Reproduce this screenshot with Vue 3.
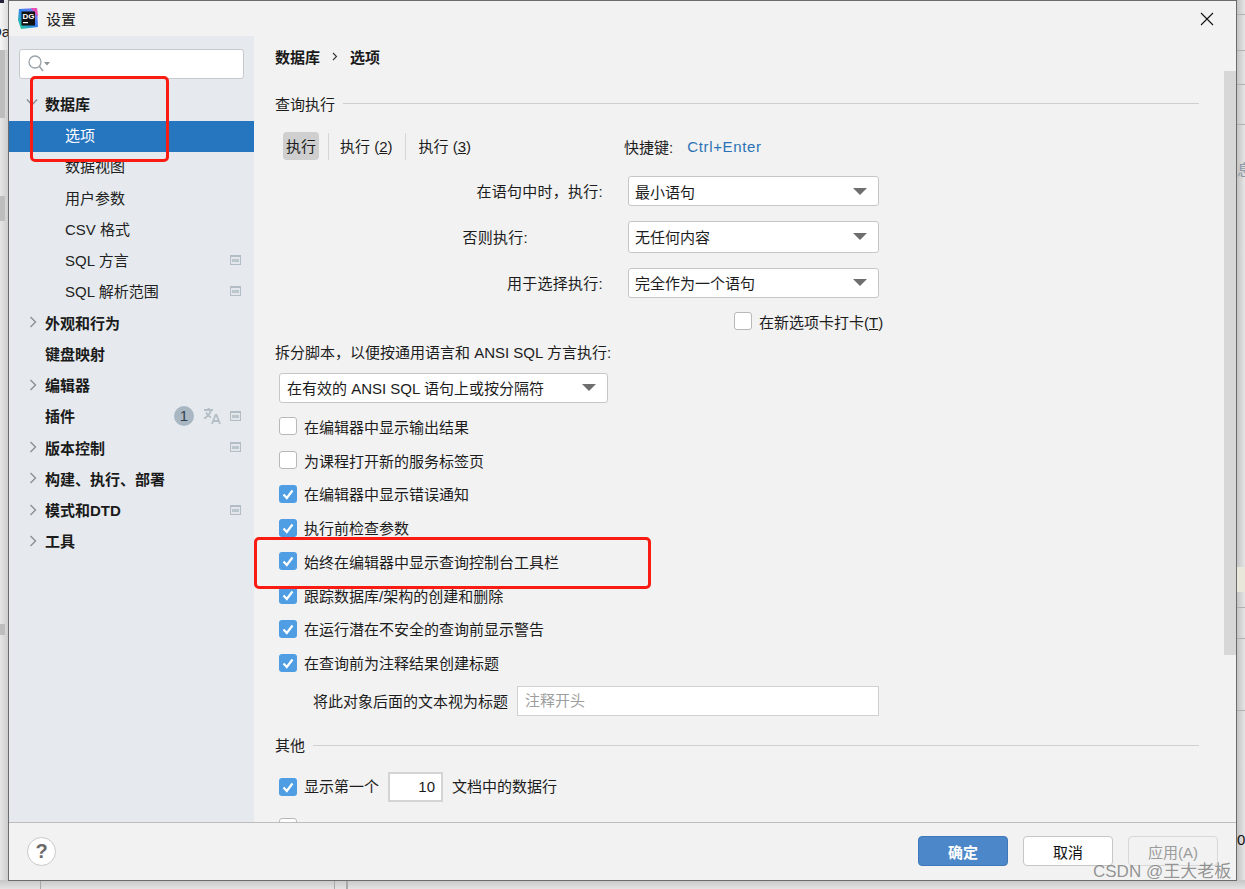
<script setup>
const tree = [
  { label: '数据库', top: true, open: true },
  { label: '选项', selected: true },
  { label: '数据视图' },
  { label: '用户参数' },
  { label: 'CSV 格式' },
  { label: 'SQL 方言', win: true },
  { label: 'SQL 解析范围', win: true },
  { label: '外观和行为', top: true, arrow: true },
  { label: '键盘映射', top: true },
  { label: '编辑器', top: true, arrow: true },
  { label: '插件', top: true, badge: '1', lang: true, win: true },
  { label: '版本控制', top: true, arrow: true, win: true },
  { label: '构建、执行、部署', top: true, arrow: true },
  { label: '模式和DTD', top: true, arrow: true, win: true },
  { label: '工具', top: true, arrow: true }
]
const selects = [
  { label: '在语句中时，执行:', value: '最小语句', cls: 'r1' },
  { label: '否则执行:', value: '无任何内容', cls: 'r2' },
  { label: '用于选择执行:', value: '完全作为一个语句', cls: 'r3' }
]
const checks = [
  { label: '在编辑器中显示输出结果', on: false },
  { label: '为课程打开新的服务标签页', on: false },
  { label: '在编辑器中显示错误通知', on: true },
  { label: '执行前检查参数', on: true },
  { label: '始终在编辑器中显示查询控制台工具栏', on: true },
  { label: '跟踪数据库/架构的创建和删除', on: true },
  { label: '在运行潜在不安全的查询前显示警告', on: true },
  { label: '在查询前为注释结果创建标题', on: true }
]
</script>

<template>
  <div class="page">
    <div class="bd bd-left">
      <i class="bd-top"></i>
      <i class="bd-spot"></i>
      <span class="bd-da">Da</span>
      <i class="bd-dark d1"></i><i class="bd-dark d2"></i><i class="bd-dark d3"></i>
    </div>
    <div class="bd bd-right">
      <i class="bd-line l1"></i><i class="bd-line l2"></i><i class="bd-line l3"></i>
      <i class="bd-line l4"></i><i class="bd-line l5"></i><i class="bd-line l6"></i><i class="bd-line l7"></i>
      <i class="bd-beige"></i>
      <span class="bd-xi">息</span>
      <span class="bd-zero">0</span>
    </div>
    <div class="bd bd-bottom"><i class="v v1"></i><i class="v v2"></i><i class="v v3"></i></div>

    <div class="dialog">
      <header class="titlebar">
        <svg class="logo" width="20" height="21" viewBox="0 0 20 21">
          <defs>
            <linearGradient id="dgl" x1="0" y1="1" x2="1" y2="0">
              <stop offset="0" stop-color="#22d88f" />
              <stop offset="0.5" stop-color="#2f80ed" />
              <stop offset="1" stop-color="#9775f8" />
            </linearGradient>
          </defs>
          <polygon points="1,1 19,0 20,19 3,21 0,12" fill="url(#dgl)" />
          <polygon points="13,0 19,0 20,9" fill="#e84fb2" />
          <rect x="3.5" y="3.5" width="13.5" height="14" fill="#111" />
          <text x="4.5" y="11" class="logo-text">DG</text>
          <rect x="5" y="14" width="5" height="1.2" fill="#fff" />
        </svg>
        <span class="title">设置</span>
        <svg class="close" width="14" height="14" viewBox="0 0 14 14">
          <path d="M1 1 13 13M13 1 1 13" stroke="#111" stroke-width="1.1" fill="none" />
        </svg>
      </header>

      <div class="body">
        <aside class="sidebar">
          <div class="search">
            <svg width="24" height="20" viewBox="0 0 24 20">
              <circle cx="8" cy="8" r="6" fill="none" stroke="#9aa3a9" stroke-width="1.3" />
              <path d="M12.500 12.500 16 17" stroke="#9aa3a9" stroke-width="1.500" />
              <path d="M17 8h6l-3 3.500z" fill="#8c959b" />
            </svg>
          </div>
          <ul class="tree">
            <li
              v-for="item in tree"
              :key="item.label"
              class="node"
              :class="{ top: item.top, selected: item.selected }"
            >
              <svg v-if="item.arrow" class="chev" width="8" height="12" viewBox="0 0 8 12">
                <path d="M1.500 1 6.500 6l-5 5" fill="none" stroke="#8a8f93" stroke-width="1.400" />
              </svg>
              <svg v-if="item.open" class="chev down" width="12" height="9" viewBox="0 0 12 9">
                <path d="M1 1.500 6 7l5-5.500" fill="none" stroke="#8a8f93" stroke-width="1.400" />
              </svg>
              <span class="node-label">{{ item.label }}</span>
              <span v-if="item.badge" class="badge">{{ item.badge }}</span>
              <svg v-if="item.lang" class="lang" width="18" height="18" viewBox="0 0 18 18">
                <path d="M1 3h9M5.500 1v2M8 3C7 7 4 10 1 11.500M3 5.500c1 2 3 4 5 5" fill="none" stroke="#b3bec6" stroke-width="1.800" />
                <path d="M9 17l3.500-9h1L17 17M10.500 14h5" fill="none" stroke="#b3bec6" stroke-width="1.800" />
              </svg>
              <span v-if="item.win" class="win"><i></i></span>
            </li>
          </ul>
        </aside>

        <main class="main">
          <div class="crumbs">
            <b>数据库</b>
            <svg width="6" height="9" viewBox="0 0 6 9"><path d="M1 1l3.500 3.500L1 8" fill="none" stroke="#333" stroke-width="1.100" /></svg>
            <b>选项</b>
          </div>

          <div class="group first"><span>查询执行</span><i></i></div>

          <div class="tabs">
            <span class="tab active">执行</span>
            <i class="tab-sep"></i>
            <span class="tab">执行 (<u>2</u>)</span>
            <i class="tab-sep"></i>
            <span class="tab">执行 (<u>3</u>)</span>
            <span class="hotkey">快捷键:</span>
            <span class="keys">Ctrl+Enter</span>
          </div>

          <div v-for="s in selects" :key="s.label" class="select-row" :class="s.cls">
            <span class="select-label">{{ s.label }}</span>
            <div class="select"><span>{{ s.value }}</span><i class="caret"></i></div>
          </div>

          <label class="check newtab">
            <i class="box"></i>
            <span>在新选项卡打卡(<u>T</u>)</span>
          </label>

          <div class="split">拆分脚本，以便按通用语言和 ANSI SQL 方言执行:</div>
          <div class="select wide"><span>在有效的 ANSI SQL 语句上或按分隔符</span><i class="caret"></i></div>

          <div class="checks">
            <label v-for="c in checks" :key="c.label" class="check">
              <i class="box" :class="{ on: c.on }">
                <svg v-if="c.on" width="18" height="18" viewBox="0 0 18 18"><path d="M4.500 9.500 7.800 13l5.700-7.500" fill="none" stroke="#fff" stroke-width="2.200" /></svg>
              </i>
              <span>{{ c.label }}</span>
            </label>
          </div>

          <div class="title-row">
            <span>将此对象后面的文本视为标题</span>
            <div class="text-input">注释开头</div>
          </div>

          <div class="group other"><span>其他</span><i></i></div>

          <div class="first-row">
            <i class="box on">
              <svg width="18" height="18" viewBox="0 0 18 18"><path d="M4.500 9.500 7.800 13l5.700-7.500" fill="none" stroke="#fff" stroke-width="2.200" /></svg>
            </i>
            <span class="first-a">显示第一个</span>
            <div class="num">10</div>
            <span class="first-b">文档中的数据行</span>
          </div>
          <i class="box clipped"></i>

          <div class="scrollbar"></div>
        </main>
      </div>

      <footer class="footer">
        <div class="help">?</div>
        <button class="btn primary">确定</button>
        <button class="btn">取消</button>
        <button class="btn disabled">应用(A)</button>
      </footer>
    </div>

    <div class="mark mark-a"></div>
    <div class="mark mark-b"></div>
    <div class="watermark">CSDN @王大老板</div>
  </div>
</template>

<style>
html, body { margin: 0; padding: 0; }
</style>

<style scoped>
.page {
  position: relative;
  width: 1245px;
  height: 889px;
  overflow: hidden;
  background: #e4e4e4;
  font-family: "Liberation Sans", "Noto Sans CJK SC", sans-serif;
  font-size: 15px;
  color: #1c1c1c;
}
.bd { position: absolute; overflow: hidden; }
.bd-left { left: 0; top: 0; width: 8px; height: 889px; background: linear-gradient(90deg, #e6e6e6, #cdcdcd); }
.bd-top { position: absolute; left: 0; top: 0; width: 8px; height: 50px; background: linear-gradient(90deg, #f6f6f6, #dcdcdc); }
.bd-spot { position: absolute; left: 0; top: 0; width: 4px; height: 3px; background: #23233a; }
.bd-da { position: absolute; left: -9px; top: 23px; font-size: 15px; color: #222; }
.bd-dark { position: absolute; left: 0; width: 5px; background: #bdbdbd; }
.d1 { top: 50px; height: 68px; }
.d2 { top: 196px; height: 25px; }
.d3 { top: 624px; height: 11px; }
.bd-right {
  left: 1237px; top: 0; width: 8px; height: 889px;
  background: linear-gradient(90deg, #c4c4c4, #e6e6e6);
}
.bd-line { position: absolute; left: 0; width: 8px; height: 1px; background: #b0b0b0; }
.l1 { top: 14px; } .l2 { top: 50px; } .l3 { top: 84px; } .l4 { top: 124px; }
.l5 { top: 607px; } .l6 { top: 638px; } .l7 { top: 710px; }
.bd-beige { position: absolute; left: 0; top: 567px; width: 8px; height: 25px; background: #e9e6da; }
.bd-xi { position: absolute; left: 0; top: 158px; font-size: 15px; color: #8b98a5; }
.bd-zero { position: absolute; left: 0; top: 831px; font-size: 15px; color: #111; }
.bd-bottom { left: 0; top: 880px; width: 1245px; height: 9px; background: linear-gradient(#c6c6c6, #e4e4e4); }
.v { position: absolute; top: 0; width: 1px; height: 9px; background: #a8a8a8; }
.v1 { left: 40px; } .v2 { left: 334px; } .v3 { left: 346px; width: 2px; }

.dialog {
  position: absolute;
  left: 8px;
  top: 0;
  width: 1229px;
  height: 881px;
  box-sizing: border-box;
  border: 1px solid #6c6c6c;
  background: #f2f2f2;
  display: flex;
  flex-direction: column;
}
.titlebar {
  height: 35px;
  flex: none;
  display: flex;
  align-items: center;
  padding-left: 9px;
}
.logo { flex: none; }
.logo-text { font-size: 8px; font-weight: 700; fill: #fff; font-family: "Liberation Sans", sans-serif; }
.title { margin-left: 8px; font-size: 15px; color: #222; }
.close { margin-left: auto; margin-right: 22px; }

.body { flex: 1; display: flex; min-height: 0; }
.sidebar {
  width: 245px;
  flex: none;
  background: #e6eaee;
  padding-top: 13px;
  box-sizing: border-box;
}
.search {
  width: 225px;
  height: 30px;
  margin-left: 10px;
  box-sizing: border-box;
  border: 1px solid #c6c9cc;
  border-radius: 3px;
  background: #fff;
  display: flex;
  align-items: center;
  padding-left: 7px;
}
.tree { list-style: none; margin: 10.3px 0 0; padding: 0; }
.node {
  position: relative;
  height: 31.25px;
  box-sizing: border-box;
  display: flex;
  align-items: center;
  padding: 0 13px 3px 56px;
  color: #222;
}
.node.top { padding-left: 36px; font-weight: 700; color: #1a1a1a; }
.node.selected { background: #2675bf; color: #fff; }
.chev { position: absolute; left: 20px; top: 8px; }
.chev.down { left: 17px; top: 9px; }
.badge {
  margin-left: auto;
  width: 20px;
  height: 20px;
  border-radius: 50%;
  background: #a9b7c2;
  color: #33424e;
  font-size: 15px;
  font-weight: 400;
  text-align: center;
  line-height: 20px;
}
.lang { margin-left: 9px; }
.win {
  margin-left: auto;
  width: 11px;
  height: 10px;
  box-sizing: border-box;
  background: #e3e7eb;
  border: 1px solid #b2bdc5;
  border-top-width: 2px;
  padding: 2px 1px 0;
  display: block;
}
.lang + .win, .badge + .win { margin-left: 9px; }
.win i { display: block; height: 3px; background: #bcc6cd; }

.main {
  position: relative;
  flex: 1;
  min-width: 0;
  overflow: hidden;
  padding: 9px 37px 0 21px;
  box-sizing: border-box;
}
.crumbs {
  height: 22px;
  display: flex;
  align-items: center;
  gap: 12px;
  color: #1a1a1a;
}
.crumbs b { font-weight: 700; }
.group { height: 22px; display: flex; align-items: center; gap: 8px; }
.group i { flex: 1; height: 1px; margin-top: 2px; background: #cfcfcf; }
.group.first { margin-top: 25px; }
.group.first i { margin-top: 1px; }
.group.other { margin-top: 18px; }

.tabs {
  margin: 18px 0 0 8px;
  height: 28px;
  display: flex;
  align-items: center;
}
.tab { line-height: 26px; padding-top: 2px; white-space: nowrap; }
.tab.active {
  width: 36px;
  background: #cfcfcf;
  border-radius: 4px;
  text-align: center;
}
.tab-sep { width: 1px; height: 27px; background: #d6d6d6; margin: 0 11px 0 9px; }
.tab-sep + .tab + .tab-sep { margin-left: 12px; margin-right: 13px; }
.hotkey { margin-left: 153px; }
.keys { margin-left: 14px; padding-top: 1px; color: #2a72b5; letter-spacing: 0.65px; }

.select-row { display: flex; align-items: center; }
.select-label {
  width: 329px;
  flex: none;
  margin: 0 24px 2px 0;
  padding-right: 1px;
  box-sizing: border-box;
  text-align: right;
  letter-spacing: 0.25px;
}
.r1 { margin-top: 16px; height: 30px; }
.r2 { margin-top: 15px; height: 32px; }
.r2 .select-label { padding-right: 76px; }
.r3 { margin-top: 15px; height: 30px; }
.select {
  width: 251px;
  height: 100%;
  box-sizing: border-box;
  border: 1px solid #c6c6c6;
  border-radius: 3px;
  background: #fff;
  display: flex;
  align-items: center;
  padding: 0 11px 0 6px;
}
.r2 .select, .r3 .select { padding-bottom: 2px; }
.caret {
  margin-left: auto;
  width: 0;
  height: 0;
  border-left: 7px solid transparent;
  border-right: 7px solid transparent;
  border-top: 7px solid #6e6e6e;
}
.box {
  width: 18px;
  height: 18px;
  flex: none;
  display: block;
  box-sizing: border-box;
  border: 1px solid #b8b8b8;
  border-radius: 3px;
  background: #fff;
}
.box.on { background: #4f9ee3; border: none; }
.box svg { display: block; }

.check { display: flex; align-items: center; gap: 7px; height: 33.75px; }
.newtab { margin: 12px 0 0 459px; height: 22px; gap: 7px; }
.split { margin-top: 10px; height: 22px; line-height: 22px; }
.select.wide { width: 329px; height: 30px; margin: 9px 0 0 4px; padding: 0 11px 2px 7px; }
.checks { margin: 6.6px 0 0 4px; }
.title-row { margin: 6.4px 0 0 38px; height: 30px; display: flex; align-items: center; gap: 9px; }
.title-row span { padding-bottom: 1px; }
.text-input {
  width: 362px;
  height: 30px;
  box-sizing: border-box;
  border: 1px solid #d0d0d0;
  background: #fff;
  color: #9e9e9e;
  padding-left: 7px;
  line-height: 27px;
}
.first-row { margin: 16px 0 0 4px; height: 30px; display: flex; align-items: center; }
.first-a { margin: 0 0 2px 7px; }
.num {
  margin-left: 9px;
  width: 55px;
  height: 30px;
  box-sizing: border-box;
  border: 2px solid #d4d4d4;
  background: #fff;
  text-align: right;
  padding-right: 6px;
  line-height: 25px;
}
.first-b { margin: 0 0 2px 9px; }
.clipped { margin: 16px 0 0 4px; }
.scrollbar {
  position: absolute;
  right: 0;
  top: 35px;
  width: 12px;
  height: 584px;
  background: #d7d7d7;
}

.footer {
  height: 58px;
  flex: none;
  box-sizing: border-box;
  border-top: 1px solid #bdbdbd;
  display: flex;
  align-items: flex-start;
  gap: 15px;
  padding: 13px 18px 0 18px;
}
.help {
  width: 29px;
  height: 29px;
  margin-top: 1px;
  box-sizing: border-box;
  border: 1px solid #c8c8c8;
  border-radius: 50%;
  background: #fff;
  color: #6b6b6b;
  font-weight: 700;
  font-size: 20px;
  text-align: center;
  line-height: 27px;
  margin-right: auto;
}
.btn {
  width: 90px;
  height: 30px;
  box-sizing: border-box;
  border: 1px solid #c6c6c6;
  border-radius: 4px;
  background: #fff;
  color: #111;
  font: inherit;
  padding: 0;
}
.btn.primary { background: #4c87c9; border-color: #3f78b8; color: #fff; font-weight: 700; }
.btn.disabled { background: #f2f2f2; border-color: #d8d8d8; color: #9b9b9b; }

.mark {
  position: absolute;
  box-sizing: border-box;
  border: 3px solid #fa1c12;
  border-radius: 5px;
}
.mark-a { left: 30px; top: 76px; width: 139px; height: 86px; }
.mark-b { left: 254px; top: 537px; width: 397px; height: 52px; }
.watermark {
  position: absolute;
  left: 1093px;
  top: 861px;
  font-size: 17px;
  line-height: 22px;
  color: rgba(85, 85, 85, 0.62);
  white-space: nowrap;
}
</style>
